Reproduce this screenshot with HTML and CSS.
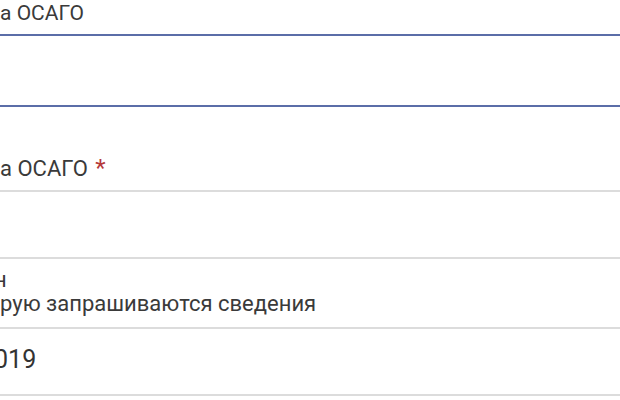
FILE: index.html
```html
<!DOCTYPE html>
<html lang="ru">
<head>
<meta charset="utf-8">
<link rel="stylesheet" href="styles.css">
</head>
<body>
<div class="form">
  <div class="label label-first">а ОСАГО</div>
  <div class="input input-focus"></div>

  <div class="label label-second">а ОСАГО <span class="req">*</span></div>
  <div class="input"></div>

  <div class="label label-third"><span class="cut">н</span><br>рую запрашиваются сведения</div>
  <div class="input input-last"><span class="value">2019</span></div>
</div>
</body>
</html>
```
FILE: styles.css
```css
html, body {
  margin: 0;
  padding: 0;
  background: #ffffff;
}
body {
  font-family: Roboto, "Noto Sans", "Liberation Sans", sans-serif;
  color: #3a3a3a;
  overflow: hidden;
}
.form {
  display: flex;
  flex-direction: column;
  width: 640px;
}
.label {
  font-size: 22px;
  line-height: 24px;
  white-space: nowrap;
}
.label-first {
  font-size: 21px;
  padding-top: 1px;
  margin-bottom: 9px;
}
.label-second {
  line-height: 26px;
  margin-top: 48px;
  margin-bottom: 8px;
}
.label-third {
  margin-top: 9px;
  margin-bottom: 11px;
}
.cut {
  margin-left: -6px;
}
.req {
  color: #b5393a;
  font-size: 24px;
  margin-left: 2px;
}
.input {
  box-sizing: border-box;
  height: 69px;
  border-top: 2px solid #dcdcdc;
  border-bottom: 2px solid #dcdcdc;
}
.input-focus {
  height: 73px;
  border-top: 2px solid #5b6da8;
  border-bottom: 2px solid #5b6da8;
}
.input-last {
  padding-top: 16px;
  font-size: 25px;
  line-height: 30px;
  color: #333333;
}
.value {
  display: inline-block;
  margin-left: -20px;
}
```
